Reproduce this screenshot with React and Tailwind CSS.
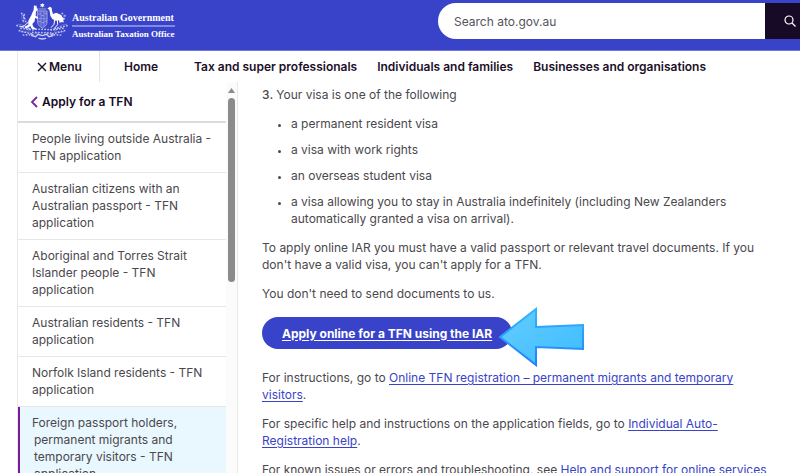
import React from "react";

const navItems = ["Tax and super professionals", "Individuals and families", "Businesses and organisations"];

const sideItems = [
  "People living outside Australia - TFN application",
  "Australian citizens with an Australian passport - TFN application",
  "Aboriginal and Torres Strait Islander people - TFN application",
  "Australian residents - TFN application",
  "Norfolk Island residents - TFN application",
];

function Crest() {
  return (
    <svg className="h-[37px] w-[52px] shrink-0" viewBox="0 0 156 111" fill="none" stroke="#fff" strokeLinecap="round" aria-hidden="true">
      {/* star */}
      <path fill="#fff" stroke="none" d="M79 0l2 4 5-1-3 4 3 4-5-1-2 4-2-4-5 1 3-4-3-4 5 1z" />
      <path strokeWidth="3" opacity=".5" d="M69 18h20" />
      {/* kangaroo */}
      <path fill="#fff" stroke="none" d="M54 5l3 5 4-3 1 6 4 7-2 3-4 1-1 14 7 5-1 4-8-2-1 10-7 8 3 8 8 6-1 3-12-3-4-8-7 5-9 1-1-4 11-6 0-12 9-16 7-17z" />
      <path strokeWidth="3" d="M36 58c-6 8-13 12-20 13" />
      {/* emu */}
      <path fill="#fff" stroke="none" d="M94 17l7-6 6 3 1 9 3 10 10-4 13 6 9 12-3 10-8 0-4-5-9 1-10-5-6-10-2-14-3-5z" />
      <path strokeWidth="3" d="M116 50l-2 14-8 9M124 50l1 15-8 9" />
      {/* shield */}
      <g opacity=".5" strokeWidth="3">
        <path fill="#fff" fillOpacity=".3" d="M65 24h28v34c0 9-7 13-14 17-7-4-14-8-14-17z" />
        <path d="M65 47h28M75 24v46M84 24v46" strokeWidth="2" />
        <path d="M68 33h5M77 38h6M87 32h5M68 56h5M78 59h5M87 55h5" />
      </g>
      {/* wattle */}
      <g opacity=".35" strokeWidth="2">
        <path d="M4 65c12-5 24 5 33 18s20 13 30 5M152 65c-12-5-24 5-33 18s-20 13-30 5" />
        <path d="M24 60c-8-9-10-19-4-27M136 60c8-9 10-19 4-27" />
        <path d="M13 86c14 6 24-1 31-11M143 86c-14 6-24-1-31-11" />
      </g>
      <g opacity=".65" strokeWidth="5" strokeDasharray="1 8">
        <path d="M17 31c6 5 10 17 13 29M25 35l-4 23M139 31c-6 5-6 17-7 29M147 38l-6 20" />
        <path d="M3 68l38 9M15 76l36 5M10 83l42 11M22 96l32-1" />
        <path d="M153 68l-38 9M141 76l-36 5M146 83l-42 11M134 96l-32-1" />
        <path d="M51 78l55 2M50 88l58 2" />
      </g>
      {/* scroll */}
      <path opacity=".75" strokeWidth="4" d="M47 98l12 3 7-7 13 4 13-4 7 7 12-3M69 106l10 2 10-2" />
    </svg>
  );
}

function Arrow() {
  return (
    <svg className="absolute left-full -top-[10px] -ml-[13px] h-[60px] w-[87px]" viewBox="0 0 87 60" aria-hidden="true">
      <defs>
        <linearGradient id="arrow-fill" x1="0" y1="0" x2="1" y2="1">
          <stop offset="0" stopColor="#64cdff" />
          <stop offset="1" stopColor="#3dbcff" />
        </linearGradient>
        <linearGradient id="arrow-edge" x1="0" y1="0" x2="0" y2="1">
          <stop offset="0" stopColor="#35b4ff" />
          <stop offset="1" stopColor="#1f80ff" />
        </linearGradient>
      </defs>
      <path
        d="M1 30L37 2V20L84 18V42L37 40V58Z"
        fill="url(#arrow-fill)"
        stroke="url(#arrow-edge)"
        strokeWidth="2"
      />
    </svg>
  );
}

function Header() {
  return (
    <header className="flex h-[51px] shrink-0 justify-between border-b border-[#6f77dc] bg-[#3943c9] text-white">
      <a href="#home" className="ml-4 flex items-start gap-1 pt-[3px]">
        <Crest />
        <span className="flex flex-col pt-[9px] font-['Liberation_Serif',serif] font-bold whitespace-nowrap">
          <span className="h-[15px] border-b-2 border-[#8188e0] text-[10px] leading-3">Australian Government</span>
          <span className="pt-px text-[9px] leading-3">Australian Taxation Office</span>
        </span>
      </a>
      <form className="mt-[3px] flex h-9 w-[362px]">
        <input
          type="search"
          aria-label="Search ato.gov.au"
          placeholder="Search ato.gov.au"
          className="min-w-0 flex-1 rounded-l-full bg-white pl-4 text-[12px] text-[#4a484d] placeholder:text-[#55535c]"
        />
        <button type="button" aria-label="Search" className="flex w-[35px] items-center justify-end bg-[#170a26] pr-1">
          <svg className="size-3" viewBox="0 0 12 12" fill="none" stroke="#fff" strokeWidth="1.2">
            <circle cx="5" cy="5" r="4" />
            <path d="M8 8l3.500 3.500" />
          </svg>
        </button>
      </form>
    </header>
  );
}

function Nav() {
  return (
    <nav className="ml-[17px] flex h-[31px] shrink-0 items-stretch border-l border-[#e8e8ea] text-[12px] font-semibold whitespace-nowrap text-[#1c1029]">
      <button type="button" className="flex w-[82px] items-center gap-[2px] border-r border-[#e3e3e5] pl-[19px]">
        <svg className="size-[10px]" viewBox="0 0 10 10" fill="none" stroke="currentColor" strokeWidth="1.4">
          <path d="M1 1l8 8M9 1l-8 8" />
        </svg>
        Menu
      </button>
      <a href="#home" className="flex w-[94px] items-center pl-6">Home</a>
      <div className="flex items-center gap-5">
        {navItems.map((item) => (
          <a key={item} href="#nav">{item}</a>
        ))}
      </div>
    </nav>
  );
}

function Sidebar() {
  return (
    <aside className="ml-[17px] flex w-[221px] shrink-0 border-x border-[#e8e8ea]">
      <div className="min-w-0 flex-1">
        <a href="#apply" className="flex h-[41px] items-center gap-1 border-b-2 border-[#dcdcde] pl-3 text-[12px] font-semibold text-[#170a26]">
          <svg className="h-3 w-2" viewBox="0 0 8 12" fill="none" stroke="#7a22a0" strokeWidth="1.8">
            <path d="M7 1L2 6l5 5" />
          </svg>
          Apply for a TFN
        </a>
        <ul>
          {sideItems.map((item) => (
            <li key={item} className="border-b border-[#e6e6e8]">
              <a href="#item" className="block pt-[7px] pr-3 pb-2 pl-[14px]">{item}</a>
            </li>
          ))}
          <li className="border-l-2 border-[#7a1a9c] bg-[#e9f7fe]">
            <a href="#item" className="block py-[7px] pr-8 pl-[14px] -indent-[2px]">
              Foreign passport holders, permanent migrants and temporary visitors - TFN application
            </a>
          </li>
        </ul>
      </div>
      <div className="flex w-[11px] flex-col items-center bg-[#fbfbfb] pt-[6px]">
        <svg className="h-[5px] w-[7px]" viewBox="0 0 7 5" fill="#8b8b8b">
          <path d="M3.500 0L7 5H0z" />
        </svg>
        <div className="mt-[5px] h-[184px] w-[7px] rounded-full bg-[#8b8b8b]" />
      </div>
    </aside>
  );
}

function Link({ children }) {
  return (
    <a href="#link" className="text-[#3943c9] underline underline-offset-2">
      {children}
    </a>
  );
}

export default function App() {
  return (
    <div className="flex h-screen flex-col overflow-hidden bg-white font-['Inter',sans-serif] text-[12px] leading-[17px] text-[#4a484d]">
      <Header />
      <Nav />
      <div className="flex min-h-0 flex-1">
        <Sidebar />
        <main className="min-w-0 flex-1 pt-1 pr-8 pl-6">
          <ol start="3" className="list-inside list-decimal">
            <li className="marker:font-medium">
              Your visa is one of the following
              <ul className="mt-3 list-disc space-y-[9px] pl-[29px] marker:text-[10px]">
                <li>a permanent resident visa</li>
                <li>a visa with work rights</li>
                <li>an overseas student visa</li>
                <li>a visa allowing you to stay in Australia indefinitely (including New Zealanders automatically granted a visa on arrival).</li>
              </ul>
            </li>
          </ol>
          <p className="mt-3">
            To apply online IAR you must have a valid passport or relevant travel documents. If you don't have a valid visa, you can't apply for a TFN.
          </p>
          <p className="mt-3">You don't need to send documents to us.</p>
          <div className="relative mt-[15px] w-fit">
            <a href="#iar" className="flex h-8 items-center rounded-full bg-[#3943c9] px-5 font-bold text-white underline underline-offset-2">
              Apply online for a TFN using the IAR
            </a>
            <Arrow />
          </div>
          <p className="mt-5">
            For instructions, go to <Link>Online TFN registration – permanent migrants and temporary visitors</Link>.
          </p>
          <p className="mt-3">
            For specific help and instructions on the application fields, go to <Link>Individual Auto-Registration help</Link>.
          </p>
          <p className="mt-3">
            For known issues or errors and troubleshooting, see <Link>Help and support for online services</Link>
          </p>
        </main>
      </div>
    </div>
  );
}
